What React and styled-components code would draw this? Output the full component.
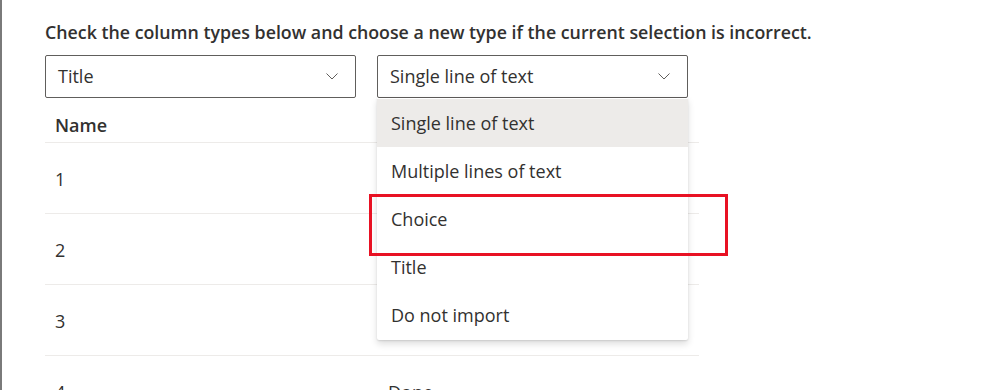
import React from "react";
import styled, { createGlobalStyle } from "styled-components";

const Global = createGlobalStyle`
  html, body { margin: 0; padding: 0; background: #ffffff; }
  body { font-family: "Open Sans", "Noto Sans", Arial, sans-serif; color: #323130; }
  * { box-sizing: border-box; }
`;

const Frame = styled.div`
  position: relative;
  height: 390px;
  overflow: hidden;
  border-left: 2px solid #7a7a7a;
  padding: 20px 0 0 43px;
`;

const Heading = styled.h2`
  margin: 0 0 10px;
  font-size: 17.8px;
  font-weight: 600;
  line-height: 25px;
  color: #323130;
  white-space: nowrap;
`;

const DropRow = styled.div`
  display: flex;
  gap: 21px;
`;

const DropWrap = styled.div`
  position: relative;
  width: 311px;
`;

const Dropdown = styled.div`
  display: flex;
  align-items: center;
  justify-content: space-between;
  height: 43px;
  padding: 0 17px 1px 12px;
  border: 1px solid #605e5c;
  border-radius: 2px;
  background: #fff;
  font-size: 18px;
  color: #323130;
`;

const Menu = styled.ul`
  position: absolute;
  top: 43px;
  left: 0;
  width: 311px;
  margin: 0;
  padding: 1px 0 1px;
  list-style: none;
  background: #fff;
  border-radius: 0 0 2px 2px;
  box-shadow: 0 3.2px 7.2px rgba(0, 0, 0, 0.132), 0 0.6px 1.8px rgba(0, 0, 0, 0.108);
  z-index: 2;
`;

const MenuItem = styled.li`
  height: 48px;
  display: flex;
  align-items: center;
  padding: 0 14px;
  font-size: 18px;
  color: #323130;
  background: ${(p) => (p.$selected ? "#edebe9" : "transparent")};
`;

const Highlight = styled.div`
  position: absolute;
  left: -8px;
  top: 139px;
  width: 359px;
  height: 62px;
  border: 3px solid #e81123;
  z-index: 3;
  pointer-events: none;
`;

const Table = styled.div`
  width: 654px;
  margin-top: 13px;
`;

const Row = styled.div`
  display: grid;
  grid-template-columns: 332px 1fr;
  align-items: center;
  height: ${(p) => (p.$header ? "32px" : "71px")};
  padding: ${(p) => (p.$header ? "0 0 3px" : "2px 0 0")};
  border-bottom: 1px solid #edebe9;
  font-size: 18px;
  font-weight: ${(p) => (p.$header ? 600 : 400)};
  color: #323130;
`;

const Cell = styled.div`
  padding-left: ${(p) => (p.$second ? "11px" : "10px")};
  white-space: nowrap;
`;

const Chevron = () => (
  <svg width="12" height="7" viewBox="0 0 12 7" fill="none">
    <path d="M0.5 0.5 L6 6 L11.5 0.5" stroke="#605e5c" strokeWidth="1" />
  </svg>
);

const options = ["Single line of text", "Multiple lines of text", "Choice", "Title", "Do not import"];

const rows = [
  { name: "1", value: "" },
  { name: "2", value: "" },
  { name: "3", value: "" },
  { name: "4", value: "Done" },
];

export default function App() {
  return (
    <>
      <Global />
      <Frame>
        <Heading>Check the column types below and choose a new type if the current selection is incorrect.</Heading>
        <DropRow>
          <DropWrap>
            <Dropdown>
              <span>Title</span>
              <Chevron />
            </Dropdown>
          </DropWrap>
          <DropWrap>
            <Dropdown>
              <span>Single line of text</span>
              <Chevron />
            </Dropdown>
            <Menu>
              {options.map((o, i) => (
                <MenuItem key={o} $selected={i === 0}>{o}</MenuItem>
              ))}
            </Menu>
            <Highlight />
          </DropWrap>
        </DropRow>
        <Table>
          <Row $header>
            <Cell>Name</Cell>
            <Cell $second />
          </Row>
          {rows.map((r) => (
            <Row key={r.name}>
              <Cell>{r.name}</Cell>
              <Cell $second>{r.value}</Cell>
            </Row>
          ))}
        </Table>
      </Frame>
    </>
  );
}
